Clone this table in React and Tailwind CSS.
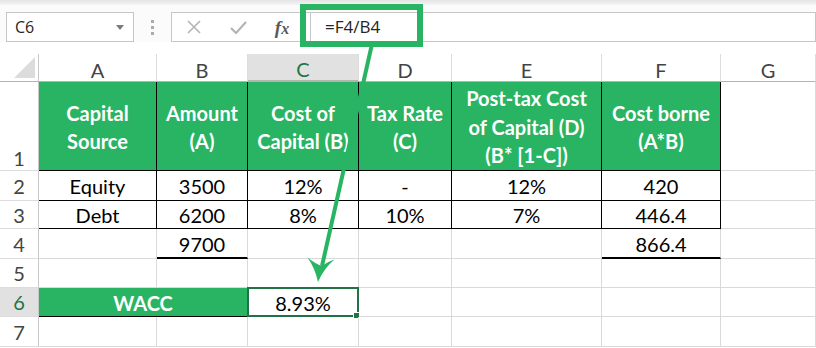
import React from "react";

// Spreadsheet cell with a gridline on its right and bottom edge.
function Cell({ className = "", children }) {
  return (
    <div
      className={
        "relative flex items-center justify-center border-r border-b pt-[1px] text-[20px] leading-none text-black " +
        className
      }
    >
      {children}
    </div>
  );
}

function RowHead({ children, className = "" }) {
  return (
    <div
      className={
        "flex justify-center border-r border-b border-r-[#c8c8c8] border-b-[#dcdcdc] text-[20px] leading-none text-[#444] " +
        className
      }
    >
      {children}
    </div>
  );
}

function ColHead({ children, className = "" }) {
  return (
    <div
      className={
        "flex items-center justify-center border-r border-b border-r-[#dcdcdc] border-b-[#b4b4b4] pt-[4px] text-[20px] leading-none text-[#444] " +
        className
      }
    >
      {children}
    </div>
  );
}

function HeadCell({ lines, className = "" }) {
  return (
    <div
      className={
        "flex flex-col items-center justify-center border-r border-b border-black bg-[#28b463] pt-[2px] text-[20px] font-bold leading-[28.5px] text-white " +
        className
      }
    >
      {lines.map((l) => (
        <span key={l} className="whitespace-nowrap">
          {l}
        </span>
      ))}
    </div>
  );
}

export default function App() {
  const grid = "border-r-[#d9d9d9] border-b-[#d9d9d9]";
  const boxed = "border-black";

  return (
    <div className="relative h-[348px] w-[816px] overflow-hidden bg-white font-['Lato',sans-serif]">
      {/* ribbon edge */}
      <div className="h-[5px] bg-gradient-to-b from-[#e4e4e4] to-[#f4f4f4]" />
      <div className="h-[7px] bg-[#fbfbfb]" />

      {/* formula bar */}
      <div className="flex h-[30px] bg-[#fbfbfb]">
        <div className="ml-[6px] flex w-[128px] items-center justify-between border border-[#c6c6c6] bg-white pl-[8px] pr-[9px]">
          <span className="font-['Open_Sans',sans-serif] text-[16px] text-[#262626]">C6</span>
          <svg width="8" height="5" viewBox="0 0 8 5">
            <path d="M0 0h8L4 5z" fill="#7a7a7a" />
          </svg>
        </div>
        <div className="flex w-[37px] flex-col items-center justify-center gap-[3px]">
          <span className="h-[3px] w-[3px] bg-[#ababab]" />
          <span className="h-[3px] w-[3px] bg-[#ababab]" />
          <span className="h-[3px] w-[3px] bg-[#ababab]" />
        </div>
        <div className="flex w-[139px] items-center border-y border-l border-[#c6c6c6] bg-white">
          <span className="flex w-[44px] justify-center">
            <svg width="14" height="14" viewBox="0 0 14 14">
              <path d="M1 1L13 13M13 1L1 13" stroke="#b4b4b4" strokeWidth="1.6" />
            </svg>
          </span>
          <span className="flex w-[44px] justify-center">
            <svg width="17" height="13" viewBox="0 0 17 13">
              <path d="M1 7L6 12L16 1" stroke="#b4b4b4" strokeWidth="2.2" fill="none" />
            </svg>
          </span>
          <span className="flex w-[44px] items-baseline justify-center font-['Liberation_Serif',serif] text-[19px] font-bold italic leading-none text-[#5a5a5a]">
            <span>f</span>
            <span className="text-[16px]">x</span>
          </span>
        </div>
        <div className="flex flex-1 items-center border border-[#c6c6c6] bg-white pl-[14px] font-['Open_Sans',sans-serif] text-[17px] text-[#262626]">
          =F4/B4
        </div>
      </div>

      <div className="h-[12px]" />

      {/* worksheet */}
      <div className="grid grid-cols-[39px_118px_91px_111px_93px_150px_119px_95px] grid-rows-[28px_89px_30px_28px_30px_29px_29px_30px]">
        {/* column headers */}
        <div className="relative border-r border-b border-r-[#c8c8c8] border-b-[#b4b4b4]">
          <svg className="absolute bottom-[3px] right-[2px]" width="22" height="21" viewBox="0 0 22 21">
            <path d="M21 0V21H0z" fill="#dcdcdc" />
          </svg>
        </div>
        <ColHead>A</ColHead>
        <ColHead>B</ColHead>
        <ColHead className="border-b-2 border-b-[#217346] bg-[#e1e1e1] text-[#217346]">C</ColHead>
        <ColHead>D</ColHead>
        <ColHead>E</ColHead>
        <ColHead>F</ColHead>
        <ColHead>G</ColHead>

        {/* row 1 */}
        <RowHead className="items-end pb-[2px]">1</RowHead>
        <HeadCell lines={["Capital", "Source"]} />
        <HeadCell lines={["Amount", "(A)"]} />
        <HeadCell lines={["Cost of", "Capital (B)"]} />
        <HeadCell lines={["Tax Rate", "(C)"]} />
        <HeadCell lines={["Post-tax Cost", "of Capital (D)", "(B* [1-C])"]} />
        <HeadCell lines={["Cost borne", "(A*B)"]} />
        <Cell className={grid} />

        {/* row 2 */}
        <RowHead className="items-center">2</RowHead>
        <Cell className={boxed}>Equity</Cell>
        <Cell className={boxed}>3500</Cell>
        <Cell className={boxed}>12%</Cell>
        <Cell className={boxed}>-</Cell>
        <Cell className={boxed}>12%</Cell>
        <Cell className={boxed}>420</Cell>
        <Cell className={grid} />

        {/* row 3 */}
        <RowHead className="items-center">3</RowHead>
        <Cell className={boxed}>Debt</Cell>
        <Cell className={boxed}>6200</Cell>
        <Cell className={boxed}>8%</Cell>
        <Cell className={boxed}>10%</Cell>
        <Cell className={boxed}>7%</Cell>
        <Cell className={boxed}>446.4</Cell>
        <Cell className={grid} />

        {/* row 4 */}
        <RowHead className="items-center">4</RowHead>
        <Cell className={grid} />
        <Cell className="border-b-2 border-r-[#d9d9d9] border-b-black">9700</Cell>
        <Cell className={grid} />
        <Cell className={grid} />
        <Cell className={grid} />
        <Cell className="border-b-2 border-r-[#d9d9d9] border-b-black">866.4</Cell>
        <Cell className={grid} />

        {/* row 5 */}
        <RowHead className="items-center">5</RowHead>
        <Cell className={grid} />
        <Cell className={grid} />
        <Cell className={grid} />
        <Cell className={grid} />
        <Cell className={grid} />
        <Cell className={grid} />
        <Cell className={grid} />

        {/* row 6 */}
        <RowHead className="items-center bg-[#e1e1e1] text-[#217346]">6</RowHead>
        <Cell className="col-span-2 border-r-[#d9d9d9] border-b-black bg-[#28b463] font-bold text-white">WACC</Cell>
        <Cell className={grid}>
          8.93%
          <div className="absolute -top-[1px] -left-[1px] -right-[1px] -bottom-[1px] border-2 border-[#217346]">
            <div className="absolute -right-[3px] -bottom-[4px] h-[7px] w-[7px] border border-white bg-[#217346]" />
          </div>
        </Cell>
        <Cell className={grid} />
        <Cell className={grid} />
        <Cell className={grid} />
        <Cell className={grid} />

        {/* row 7 */}
        <RowHead className="items-center">7</RowHead>
        <Cell className={grid} />
        <Cell className={grid} />
        <Cell className={grid} />
        <Cell className={grid} />
        <Cell className={grid} />
        <Cell className={grid} />
        <Cell className={grid} />
      </div>

      {/* callout around the formula */}
      <div className="absolute left-[300px] top-[4px] h-[43px] w-[123px] border-[6px] border-[#28b463]" />

      {/* pointer from the formula to the result cell */}
      <svg className="pointer-events-none absolute left-0 top-0" width="816" height="348" viewBox="0 0 816 348">
        <path d="M372 44L322 266" stroke="#28b463" strokeWidth="4" />
        <path
          d="M318 282Q315 268 307.5 257.5Q315 263.5 321.5 266Q327 262 334.5 259.5Q324 268 318 282Z"
          fill="#28b463"
        />
      </svg>
    </div>
  );
}
